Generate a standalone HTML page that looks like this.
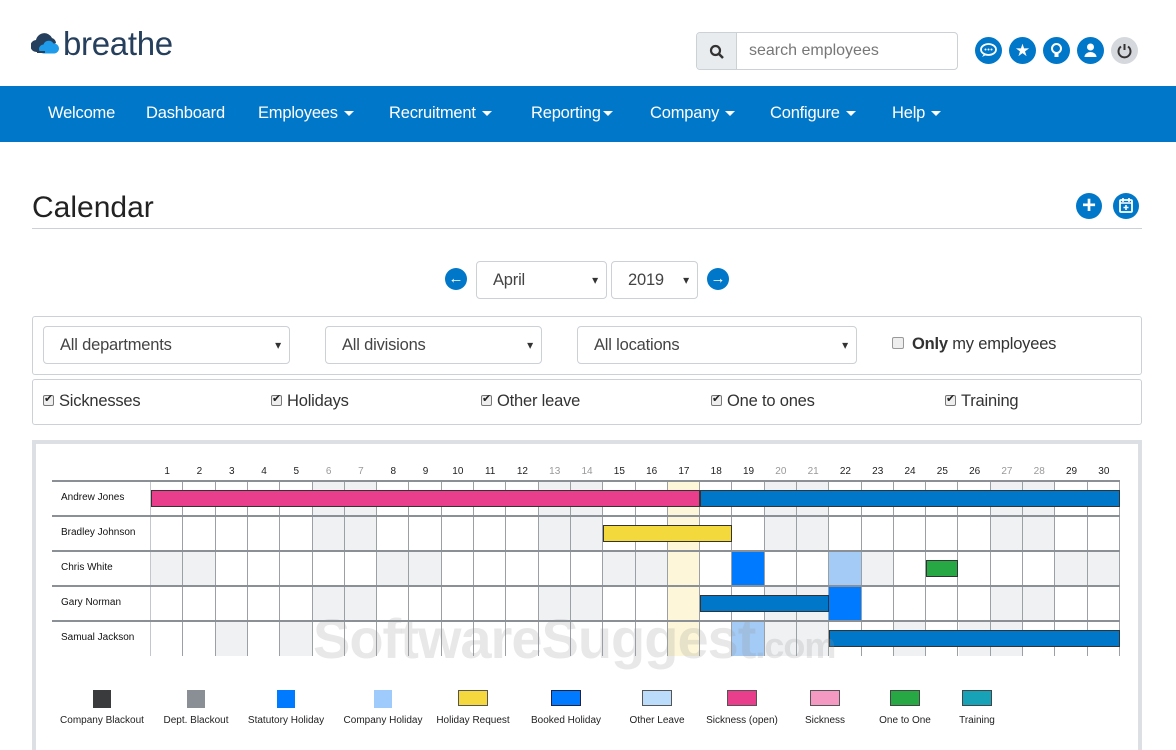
<!DOCTYPE html>
<html><head><meta charset="utf-8"><style>
*{box-sizing:border-box;margin:0;padding:0}
body{width:1176px;height:741px;overflow:hidden;background:#fff;font-family:"Liberation Sans",sans-serif;color:#222;position:relative}
.a{position:absolute}
.nav{left:0;top:86px;width:1176px;height:56px;background:#0077c8}
.nav span{position:absolute;top:18px;color:#fff;font-size:16.5px;letter-spacing:-0.2px}
.car{display:inline-block;width:0;height:0;border-left:5px solid transparent;border-right:5px solid transparent;border-top:5px solid #fff;vertical-align:middle;margin-left:6px}
.ic{width:27px;height:27px;border-radius:50%;background:#0077c8;top:37px}
.sel{border:1px solid #ccd1d6;border-radius:4px;background:#fff;font-size:16.5px;color:#444;padding-left:16px;line-height:36px;letter-spacing:-0.2px}
.sel:after{content:"▾";position:absolute;right:8px;top:0;font-size:12px;color:#333}
.box{border:1px solid #ccd1d6;border-radius:3px}
.cb{font-size:16.5px;color:#333;top:392px;letter-spacing:-0.2px}
.cb i{display:inline-block;width:11px;height:11px;border:1px solid #777;border-radius:2px;background:#eee;margin-right:5px;vertical-align:0;position:relative}
.cb i:after{content:"✔";position:absolute;left:0;top:-4px;font-size:11px;font-style:normal;color:#222}
.leg{top:690px;width:90px;text-align:center;font-size:10px;color:#222}
.leg b{display:block;width:18px;height:18px;margin:0 auto 7px}
</style></head><body>
<svg class="a" style="left:31px;top:31px" width="30" height="24" viewBox="0 0 30 24"><path d="M6 21a6 6 0 0 1-1-12 8.5 8.5 0 0 1 16-2 6 6 0 0 1 4 5" fill="#253f5c"/><path d="M12.5 22.5a4.5 4.5 0 0 1 0-9 5.5 5.5 0 0 1 10-1 4.5 4.5 0 0 1 1 10z" fill="#1e9bea"/><path d="M6 21h8" stroke="#253f5c" stroke-width="2"/></svg>
<div class="a" style="left:63px;top:25px;font-size:33px;color:#253f5c;letter-spacing:-0.3px">breathe</div>
<div class="a" style="left:696px;top:32px;width:262px;height:38px;border:1px solid #ccd1d6;border-radius:4px;overflow:hidden">
<div class="a" style="left:0;top:0;width:40px;height:36px;background:#e9ecef;border-right:1px solid #ccd1d6"></div>
<svg class="a" style="left:12px;top:11px" width="16" height="16" viewBox="0 0 16 16"><circle cx="6.5" cy="6.5" r="4.5" stroke="#333" stroke-width="2.2" fill="none"/><path d="M10 10l4 4" stroke="#333" stroke-width="2.5"/></svg>
<div class="a" style="left:52px;top:9px;font-size:16px;color:#777">search employees</div></div>
<div class="a ic" style="left:975px"><svg width="27" height="27" viewBox="0 0 27 27"><ellipse cx="13.5" cy="12.5" rx="7.5" ry="5.5" fill="none" stroke="#fff" stroke-width="1.8"/><path d="M9 17l-2 3 4-2" fill="#fff"/><circle cx="10.5" cy="12.5" r="1" fill="#fff"/><circle cx="13.5" cy="12.5" r="1" fill="#fff"/><circle cx="16.5" cy="12.5" r="1" fill="#fff"/></svg></div>
<div class="a ic" style="left:1009px;color:#fff;text-align:center;font-size:17px;line-height:27px">★</div>
<div class="a ic" style="left:1043px"><svg width="27" height="27" viewBox="0 0 27 27"><circle cx="13.5" cy="11.5" r="4.5" fill="none" stroke="#fff" stroke-width="2"/><rect x="11.5" y="16" width="4" height="4" fill="#fff"/></svg></div>
<div class="a ic" style="left:1077px"><svg width="27" height="27" viewBox="0 0 27 27"><circle cx="13.5" cy="10" r="3.5" fill="#fff"/><path d="M7.5 20a6 5 0 0 1 12 0z" fill="#fff"/></svg></div>
<div class="a ic" style="left:1111px;background:#d5d8dc"><svg width="27" height="27" viewBox="0 0 27 27"><path d="M10 9.5a6 6 0 1 0 7 0" fill="none" stroke="#333" stroke-width="2"/><path d="M13.5 7v6" stroke="#333" stroke-width="2"/></svg></div>
<div class="a nav"><span style="left:48px">Welcome</span><span style="left:146px">Dashboard</span><span style="left:258px">Employees<i class="car"></i></span><span style="left:389px">Recruitment<i class="car"></i></span><span style="left:531px">Reporting<i class="car" style="margin-left:2px"></i></span><span style="left:650px">Company<i class="car"></i></span><span style="left:770px">Configure<i class="car"></i></span><span style="left:892px">Help<i class="car"></i></span></div>
<div class="a" style="left:32px;top:191px;font-size:30px;color:#222">Calendar</div>
<div class="a" style="left:32px;top:228px;width:1110px;height:1px;background:#ccd1d6"></div>
<div class="a" style="left:1076px;top:193px;width:26px;height:26px;border-radius:50%;background:#0077c8;color:#fff;font-size:24px;font-weight:bold;text-align:center;line-height:25px">+</div>
<div class="a" style="left:1113px;top:193px;width:26px;height:26px;border-radius:50%;background:#0077c8"><svg width="26" height="26" viewBox="0 0 26 26"><rect x="7" y="7" width="12" height="12" rx="1" fill="none" stroke="#fff" stroke-width="1.8"/><path d="M7 10h12M10 5v4M16 5v4M13 12v5M10.5 14.5h5" stroke="#fff" stroke-width="1.6"/></svg></div>
<div class="a" style="left:445px;top:268px;width:22px;height:22px;border-radius:50%;background:#0077c8;color:#fff;text-align:center;font-weight:bold;line-height:22px;font-size:15px">←</div>
<div class="a sel" style="left:476px;top:261px;width:131px;height:38px">April</div>
<div class="a sel" style="left:611px;top:261px;width:87px;height:38px">2019</div>
<div class="a" style="left:707px;top:268px;width:22px;height:22px;border-radius:50%;background:#0077c8;color:#fff;text-align:center;font-weight:bold;line-height:22px;font-size:15px">→</div>
<div class="a box" style="left:32px;top:316px;width:1110px;height:59px"></div>
<div class="a sel" style="left:43px;top:326px;width:247px;height:38px">All departments</div>
<div class="a sel" style="left:325px;top:326px;width:217px;height:38px">All divisions</div>
<div class="a sel" style="left:577px;top:326px;width:280px;height:38px">All locations</div>
<div class="a" style="left:892px;top:335px;font-size:16.5px;color:#333;letter-spacing:-0.2px"><i style="display:inline-block;width:12px;height:12px;border:1px solid #999;border-radius:2px;background:#eee;margin-right:8px"></i><b>Only</b> my employees</div>
<div class="a box" style="left:32px;top:379px;width:1110px;height:46px"></div>
<div class="a cb" style="left:43px"><i></i>Sicknesses</div>
<div class="a cb" style="left:271px"><i></i>Holidays</div>
<div class="a cb" style="left:481px"><i></i>Other leave</div>
<div class="a cb" style="left:711px"><i></i>One to ones</div>
<div class="a cb" style="left:945px"><i></i>Training</div>
<div class="a" style="left:32px;top:440px;width:1110px;height:310px;border:4px solid #dcdfe3;border-bottom:none"></div>
<div id="g"></div>
<div class="a" style="left:313px;top:606px;font-size:56px;font-weight:bold;color:rgba(150,150,150,0.22);letter-spacing:-1px">SoftwareSuggest<span style="font-size:36px">.com</span></div>
<div class="a leg" style="left:57px"><b style="background:#3a3b3d"></b>Company Blackout</div>
<div class="a leg" style="left:151px"><b style="background:#8a8f95"></b>Dept. Blackout</div>
<div class="a leg" style="left:241px"><b style="background:#007bff"></b>Statutory Holiday</div>
<div class="a leg" style="left:338px"><b style="background:#9ecbfb"></b>Company Holiday</div>
<div class="a leg" style="left:428px;width:90px"><b style="background:#f5d83d;border:1px solid #555;width:30px;height:16px;margin-bottom:9px"></b>Holiday Request</div>
<div class="a leg" style="left:521px"><b style="background:#007bff;border:1px solid #224;width:30px;height:16px;margin-bottom:9px"></b>Booked Holiday</div>
<div class="a leg" style="left:612px"><b style="background:#bcdcfb;border:1px solid #555;width:30px;height:16px;margin-bottom:9px"></b>Other Leave</div>
<div class="a leg" style="left:697px"><b style="background:#e83e8c;border:1px solid #555;width:30px;height:16px;margin-bottom:9px"></b>Sickness (open)</div>
<div class="a leg" style="left:780px"><b style="background:#f49ac2;border:1px solid #555;width:30px;height:16px;margin-bottom:9px"></b>Sickness</div>
<div class="a leg" style="left:860px"><b style="background:#28a745;border:1px solid #444;width:30px;height:16px;margin-bottom:9px"></b>One to One</div>
<div class="a leg" style="left:932px"><b style="background:#17a2b8;border:1px solid #444;width:30px;height:16px;margin-bottom:9px"></b>Training</div>
<script>
var W=32.3,X=151,T=481,R=35,h='';
function d(x,y,w,hh,s){h+='<div class="a" style="left:'+x+'px;top:'+y+'px;width:'+w+'px;height:'+hh+'px;'+s+'"></div>';}
var names=['Andrew Jones','Bradley Johnson','Chris White','Gary Norman','Samual Jackson'];
var gray=[[6,7,13,14,20,21,27,28],[6,7,13,14,20,21,27,28],[1,2,8,9,15,16,23,29,30],[6,7,13,14,20,21,27,28],[3,5,20,21,24,26,27]];
var wk=[6,7,13,14,20,21,27,28];
for(var r=0;r<5;r++){gray[r].forEach(function(g){d(X+(g-1)*W,T+r*R,W,R,'background:#f0f1f3');});
h+='<div class="a" style="left:61px;top:'+(T+r*R+11)+'px;font-size:10px;color:#111">'+names[r]+'</div>';}
d(X+16*W,T,W,5*R,'background:#fdf6d8');
d(X+18*W,T+2*R,W,R,'background:#007bff');d(X+21*W,T+2*R,W,R,'background:#a3cbf5');
d(X+21*W,T+3*R,W,R,'background:#007bff');d(X+18*W,T+4*R,W,R,'background:#a3cbf5');
for(var i=0;i<=30;i++){d(Math.round(X+i*W)-1,T,1,5*R,'background:'+(i==0?'#c3c7cb':'#9ba0a5'));}
for(var i=1;i<=30;i++){h+='<div class="a" style="left:'+(X+(i-1)*W)+'px;top:466px;width:'+W+'px;text-align:center;font-size:10px;color:'+(wk.indexOf(i)>=0?'#999':'#222')+'">'+i+'</div>';}
for(var r=0;r<5;r++)d(52,T+r*R-1,1068,2,'background:#8a9096');
function bar(a,b,r,c){d(X+(a-1)*W,T+r*R+9,(b-a+1)*W,17,'background:'+c+';border:1.5px solid #333');}
bar(1,17,0,'#e83e8c');bar(18,30,0,'#0077c8');bar(15,18,1,'#f4d93d');bar(25,25,2,'#28a745');bar(18,21,3,'#0077c8');bar(22,30,4,'#0077c8');
document.getElementById('g').innerHTML=h;
</script>
</body></html>
